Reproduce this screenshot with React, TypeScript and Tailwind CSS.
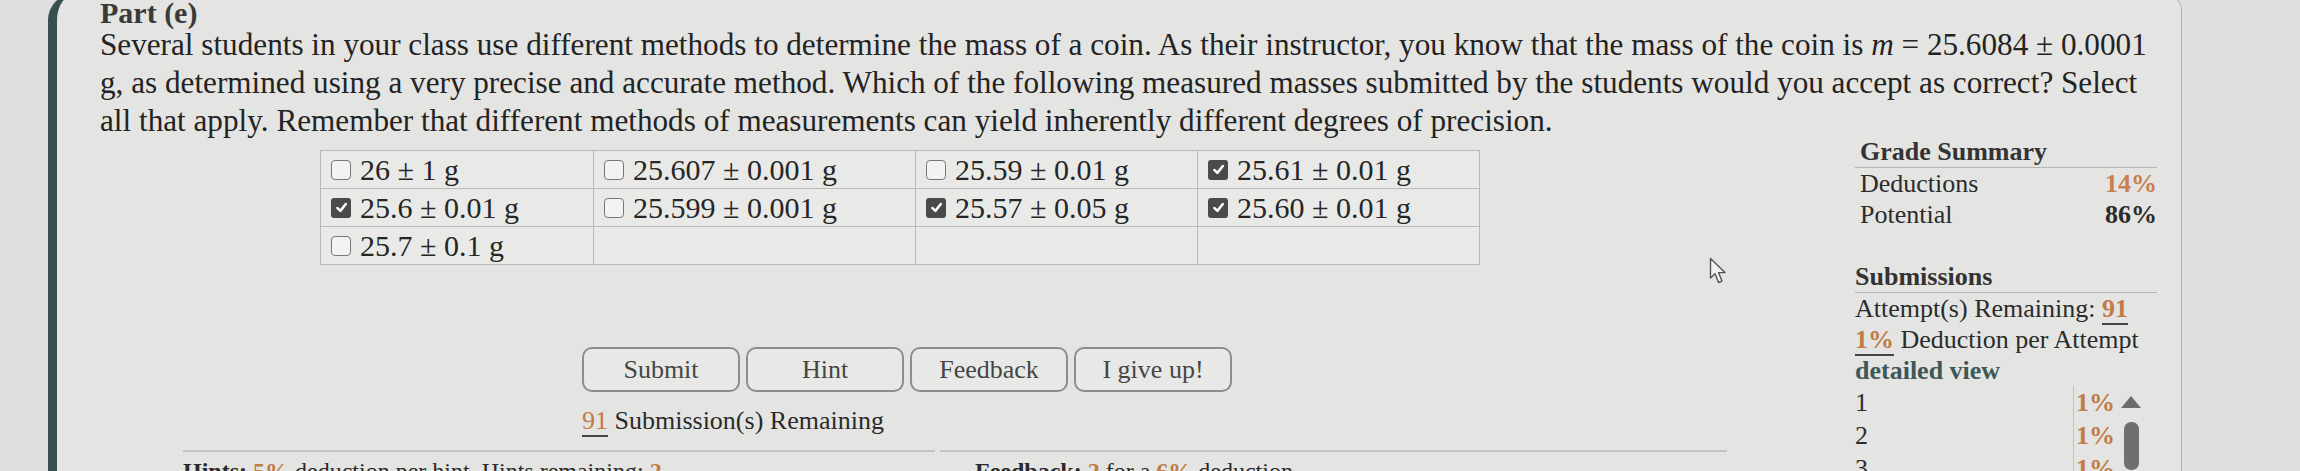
import React from 'react'

const serif = { fontFamily: '"Liberation Serif", "Times New Roman", serif' }

type Choice = { label: string; checked: boolean }

const rows: (Choice | null)[][] = [
  [
    { label: '26 ± 1 g', checked: false },
    { label: '25.607 ± 0.001 g', checked: false },
    { label: '25.59 ± 0.01 g', checked: false },
    { label: '25.61 ± 0.01 g', checked: true },
  ],
  [
    { label: '25.6 ± 0.01 g', checked: true },
    { label: '25.599 ± 0.001 g', checked: false },
    { label: '25.57 ± 0.05 g', checked: true },
    { label: '25.60 ± 0.01 g', checked: true },
  ],
  [{ label: '25.7 ± 0.1 g', checked: false }, null, null, null],
]

function Checkbox({ checked }: { checked: boolean }) {
  if (checked) {
    return (
      <span className="flex h-[20px] w-[20px] shrink-0 items-center justify-center rounded-[3px] bg-[#4a4a4a]">
        <svg viewBox="0 0 16 16" className="h-[15px] w-[15px]">
          <path d="M3.5 8.5 L6.8 11.6 L12.6 4.2" fill="none" stroke="#fff" strokeWidth="2.6" strokeLinecap="round" strokeLinejoin="round" />
        </svg>
      </span>
    )
  }
  return <span className="h-[20px] w-[20px] shrink-0 rounded-[4px] border-[1.5px] border-[#767676] bg-[#f3f3f1]" />
}

function ChoiceCell({ choice, w }: { choice: Choice | null; w: string }) {
  return (
    <div className={`flex h-[38px] items-center gap-[9px] border-r-[1.5px] border-b-[1.5px] border-[#b9b9b7] pl-[10px] ${w}`}>
      {choice && (
        <>
          <Checkbox checked={choice.checked} />
          <span className="whitespace-nowrap text-[30px] leading-none text-[#262626]">{choice.label}</span>
        </>
      )}
    </div>
  )
}

const colWidths = ['w-[273px]', 'w-[322px]', 'w-[282px]', 'w-[282px]']

function Cursor() {
  return (
    <svg viewBox="0 0 20 28" className="absolute left-[1709px] top-[257px] h-[28px] w-[20px]">
      <path d="M1.5 1.5 L1.5 21 L6 16.8 L9.6 25.5 L13 24 L9.5 15.6 L16 15.6 Z" fill="#f2f2f2" stroke="#555" strokeWidth="1.4" strokeLinejoin="round" />
    </svg>
  )
}

export default function App() {
  return (
    <div className="relative h-[471px] w-[2300px] overflow-hidden bg-[#dfe0de]" style={serif}>
      <div className="-mt-[6px] ml-[48px] h-[520px] w-[2134px] rounded-tl-[26px] rounded-tr-[16px] border-t border-r border-l-[9px] border-t-[#cfd0ce] border-r-[#b3b4b2] border-l-[#37504f] bg-[#e4e5e3] pl-[43px] pr-[20px]">
        {/* Question text */}
        <div className="pt-[3px] text-[30px] font-bold leading-[30px] text-[#3a3a3a]">Part (e)</div>
        <p className="-mt-[2px] whitespace-nowrap text-[31.2px] leading-[38px] text-[#232323]">
          Several students in your class use different methods to determine the mass of a coin. As their instructor, you know that the mass of the coin is{' '}
          <i>m</i> = 25.6084 ± 0.0001
          <br />
          g, as determined using a very precise and accurate method. Which of the following measured masses submitted by the students would you accept as correct? Select
          <br />
          all that apply. Remember that different methods of measurements can yield inherently different degrees of precision.
        </p>

        <div className="flex">
          {/* Left: choices, buttons, hints */}
          <div className="w-[1640px]">
            <div className="ml-[220px] mt-[10px] w-fit border-t-[1.5px] border-l-[1.5px] border-[#b9b9b7] bg-[#e9eae8]">
              {rows.map((row, i) => (
                <div key={i} className="flex">
                  {row.map((c, j) => (
                    <ChoiceCell key={j} choice={c} w={colWidths[j]} />
                  ))}
                </div>
              ))}
            </div>

            <div className="ml-[482px] mt-[82px] flex gap-[6px]">
              {['Submit', 'Hint', 'Feedback', 'I give up!'].map((b) => (
                <button
                  key={b}
                  className="h-[45px] w-[158px] rounded-[10px] border-2 border-[#8d8d8b] bg-[#e8e9e7] text-[26px] leading-none text-[#454545]"
                  style={serif}
                >
                  {b}
                </button>
              ))}
            </div>

            <div className="ml-[482px] mt-[13px] text-[26px] leading-[32px] text-[#2a2a2a]">
              <span className="border-b-2 border-[#444] text-[#c27a46]">91</span> Submission(s) Remaining
            </div>

            <div className="mt-[13px] flex">
              <div className="ml-[83px] w-[752px] border-t-2 border-[#c4c5c3] pt-[5px] text-[24px] leading-[28px] text-[#2a2a2a]">
                <b>Hints:</b> <span className="font-bold text-[#c27a46]">5%</span> deduction per hint. Hints remaining: <span className="font-bold text-[#c27a46]">2</span>
              </div>
              <div className="ml-[5px] w-[787px] border-t-2 border-[#c4c5c3] pl-[35px] pt-[5px] text-[24px] leading-[28px] text-[#2a2a2a]">
                <b>Feedback:</b> <span className="font-bold text-[#c27a46]">2</span> for a <span className="font-bold text-[#c27a46]">6%</span> deduction
              </div>
            </div>
          </div>

          {/* Right: grade summary */}
          <div className="-mt-[4px] ml-[115px] w-[302px] text-[26px] leading-[31px] text-[#2b2b2b]">
            <div className="border-b-[1.5px] border-[#b5b6b4] pl-[5px] font-bold text-[#333]">Grade Summary</div>
            <div className="flex justify-between pl-[5px]">
              <span>Deductions</span>
              <span className="font-bold text-[#c98050]">14%</span>
            </div>
            <div className="flex justify-between pl-[5px]">
              <span>Potential</span>
              <span className="font-bold">86%</span>
            </div>

            <div className="mt-[31px] border-b-[1.5px] border-[#b5b6b4] font-bold text-[#333]">Submissions</div>
            <div>
              Attempt(s) Remaining: <span className="border-b-2 border-[#444] font-bold text-[#c27a46]">91</span>
            </div>
            <div>
              <span className="border-b-2 border-[#444] font-bold text-[#c27a46]">1%</span> Deduction per Attempt
            </div>
            <div className="font-bold text-[#3d5856]">detailed view</div>
            <div className="flex leading-[33px]">
              <div className="w-[218px]">
                <div>1</div>
                <div>2</div>
                <div>3</div>
              </div>
              <div className="border-l border-[#c2c3c1] pl-[2px] font-bold text-[#c27a46]">
                <div>1%</div>
                <div>1%</div>
                <div>1%</div>
              </div>
              <div className="ml-[6px] flex flex-col items-center pt-[10px]">
                <svg viewBox="0 0 20 12" className="h-[12px] w-[20px]">
                  <path d="M10 0 L20 12 L0 12 Z" fill="#6b6b6b" />
                </svg>
                <div className="mt-[14px] h-[48px] w-[15px] rounded-[7px] bg-[#6e6f6e]" />
              </div>
            </div>
          </div>
        </div>
      </div>
      <Cursor />
    </div>
  )
}
